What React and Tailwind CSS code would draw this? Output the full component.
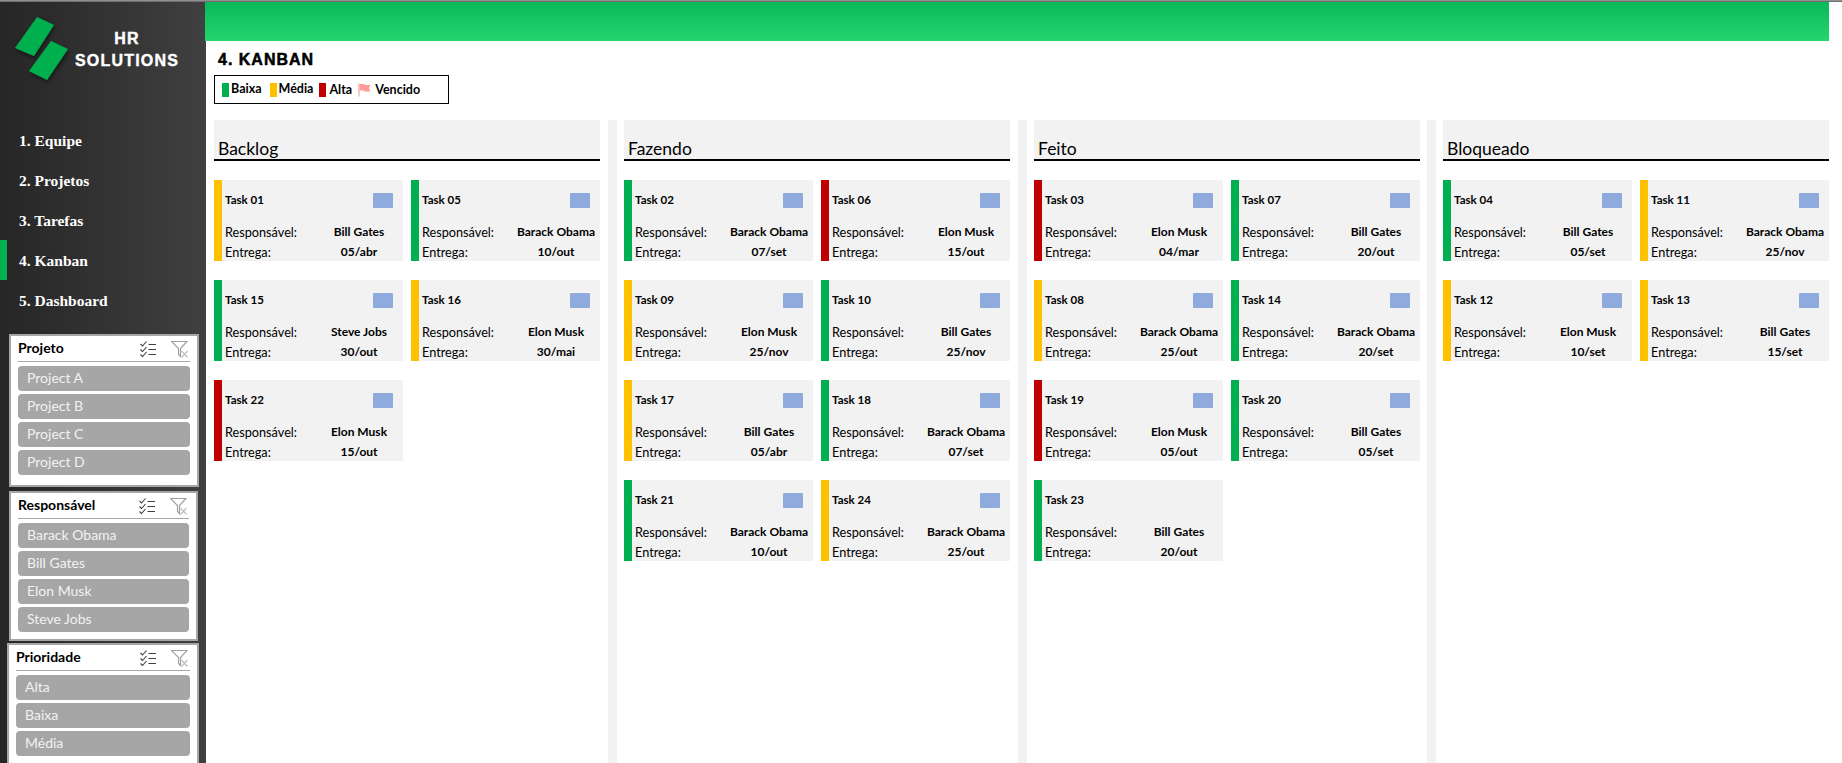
const GREEN = "bg-[#00b050]";
const YELLOW = "bg-[#ffc000]";
const RED = "bg-[#c00000]";
const PRI = { g: GREEN, y: YELLOW, r: RED };

const COLUMNS = [
  {
    name: "Backlog",
    tasks: [
      ["01", "y", "Bill Gates", "05/abr"],
      ["05", "g", "Barack Obama", "10/out"],
      ["15", "g", "Steve Jobs", "30/out"],
      ["16", "y", "Elon Musk", "30/mai"],
      ["22", "r", "Elon Musk", "15/out"],
    ],
  },
  {
    name: "Fazendo",
    tasks: [
      ["02", "g", "Barack Obama", "07/set"],
      ["06", "r", "Elon Musk", "15/out"],
      ["09", "y", "Elon Musk", "25/nov"],
      ["10", "g", "Bill Gates", "25/nov"],
      ["17", "y", "Bill Gates", "05/abr"],
      ["18", "g", "Barack Obama", "07/set"],
      ["21", "g", "Barack Obama", "10/out"],
      ["24", "y", "Barack Obama", "25/out"],
    ],
  },
  {
    name: "Feito",
    tasks: [
      ["03", "r", "Elon Musk", "04/mar"],
      ["07", "g", "Bill Gates", "20/out"],
      ["08", "y", "Barack Obama", "25/out"],
      ["14", "g", "Barack Obama", "20/set"],
      ["19", "r", "Elon Musk", "05/out"],
      ["20", "g", "Bill Gates", "05/set"],
      ["23", "g", "Bill Gates", "20/out", true],
    ],
  },
  {
    name: "Bloqueado",
    tasks: [
      ["04", "g", "Bill Gates", "05/set"],
      ["11", "y", "Barack Obama", "25/nov"],
      ["12", "y", "Elon Musk", "10/set"],
      ["13", "y", "Bill Gates", "15/set"],
    ],
  },
];

function Card({ id, pri, who, date, noIcon }) {
  return (
    <div className="flex h-[81px] w-[189px] bg-[#f2f2f2]">
      <div className={`h-full w-[8px] shrink-0 ${PRI[pri]}`} />
      <div className="flex min-w-0 flex-1 flex-col pl-[3px] text-[12px] leading-[20px] text-black">
        <div className="mb-[3px] flex h-[39px] shrink-0 items-center justify-between pr-[10px]">
          <span className="text-[11.5px] font-bold">Task {id}</span>
          {!noIcon && <span className="mt-[1px] h-[15px] w-[20px] rounded-[1px] bg-[#8faadc]" />}
        </div>
        <div className="flex">
          <span className="w-[90px] shrink-0 text-[12.7px]">Responsável:</span>
          <span className="flex-1 text-center font-bold whitespace-nowrap">{who}</span>
        </div>
        <div className="flex">
          <span className="w-[90px] shrink-0 text-[12.7px]">Entrega:</span>
          <span className="flex-1 text-center font-bold">{date}</span>
        </div>
      </div>
    </div>
  );
}

function Column({ name, tasks }) {
  return (
    <section className="w-[386px] shrink-0">
      <div className="flex h-[41px] items-end border-b-2 border-black bg-[#f2f2f2] pl-[4px] text-[17.5px] leading-[20px] font-normal text-black">
        {name}
      </div>
      <div className="mt-[19px] grid grid-cols-[189px_189px] gap-x-[8px] gap-y-[19px]">
        {tasks.map(([id, pri, who, date, noIcon]) => (
          <Card key={id} id={id} pri={pri} who={who} date={date} noIcon={noIcon} />
        ))}
      </div>
    </section>
  );
}

function ChecklistIcon() {
  return (
    <svg width="16" height="16" viewBox="0 0 16 16" fill="none" stroke="#404040" strokeWidth="1.1">
      <path d="M0.5 3 L2.5 5 L6.5 0.5" />
      <path d="M0.5 8.5 L2.5 10.5 L6.5 6" />
      <path d="M0.5 13.5 L2.5 15.5 L6.5 11" />
      <path d="M8.5 3.5 H16 M8.5 8.5 H16 M8.5 13.5 H16" />
    </svg>
  );
}

function ClearFilterIcon() {
  return (
    <svg width="17" height="17" viewBox="0 0 17 17" fill="none" strokeWidth="1.2">
      <path d="M0.5 0.5 H16 L9.5 7.5 V15.5 L7.5 13.5 V7.5 Z" stroke="#a0a0a0" />
      <path d="M10.5 10 L16.5 16.5 M16.5 10 L10.5 16.5" stroke="#bfbfbf" />
    </svg>
  );
}

function Slicer({ title, items, className }) {
  return (
    <div className={`border-2 border-[#a6a6a6] bg-white ${className}`}>
      <div className="flex h-[25px] items-center justify-between">
        <span className="pb-[3px] text-[14px] font-bold text-black">{title}</span>
        <div className="flex items-center gap-[15px] pt-[1px] pr-[2px]">
          <ChecklistIcon />
          <ClearFilterIcon />
        </div>
      </div>
      <div className="mb-[4px] h-[1px] bg-[#a6a6a6]" />
      <div className="flex flex-col gap-[3px]">
        {items.map((t) => (
          <div
            key={t}
            className="flex h-[25px] items-center rounded-[4px] bg-[#a6a6a6] pb-[3px] pl-[9px] text-[14px] text-[#f2f2f2]"
          >
            {t}
          </div>
        ))}
      </div>
    </div>
  );
}

function Logo() {
  return (
    <svg width="80" height="90" viewBox="0 0 80 90" className="absolute left-0 top-0">
      <defs>
        <filter id="sh" x="-30%" y="-30%" width="160%" height="160%">
          <feDropShadow dx="1" dy="2" stdDeviation="2" floodColor="#000" floodOpacity="0.6" />
        </filter>
      </defs>
      <polygon points="37,15 54,23 34,54 15,46" fill="#00b050" filter="url(#sh)" />
      <polygon points="51,39 68,47 47,78 29,69" fill="#00b050" filter="url(#sh)" />
    </svg>
  );
}

const NAV = ["1. Equipe", "2. Projetos", "3. Tarefas", "4. Kanban", "5. Dashboard"];

function Sidebar() {
  return (
    <aside className="relative z-10 flex h-[761px] w-[206px] shrink-0 flex-col overflow-hidden bg-gradient-to-r from-[#262626] to-[#404040]">
      <div className="relative h-[118px] shrink-0">
        <Logo />
        <div className="absolute left-[75px] top-[26px] w-[104px] text-center [font-family:'Liberation_Sans',sans-serif] text-[16px] leading-[22px] font-bold tracking-[1.2px] whitespace-nowrap text-white [-webkit-text-stroke:0.4px_white]">
          HR
          <br />
          SOLUTIONS
        </div>
      </div>
      <nav className="shrink-0">
        {NAV.map((n) => (
          <div key={n} className="relative flex h-[40px] items-center pt-[2px] pl-[19px] [font-family:'Liberation_Serif',serif] text-[15.5px] font-bold text-white">
            {n === "4. Kanban" && <span className="absolute left-0 top-0 h-full w-[7px] bg-[#00b050]" />}
            {n}
          </div>
        ))}
      </nav>
      <Slicer
        title="Projeto"
        items={["Project A", "Project B", "Project C", "Project D"]}
        className="mt-[14px] ml-[9px] h-[153px] w-[190px] shrink-0 px-[7px]"
      />
      <Slicer
        title="Responsável"
        items={["Barack Obama", "Bill Gates", "Elon Musk", "Steve Jobs"]}
        className="mt-[4px] ml-[9px] h-[150px] w-[189px] shrink-0 px-[7px]"
      />
      <Slicer
        title="Prioridade"
        items={["Alta", "Baixa", "Média"]}
        className="mt-[2px] ml-[7px] h-[140px] w-[192px] shrink-0 px-[7px]"
      />
    </aside>
  );
}

function Legend() {
  return (
    <div className="mt-[6px] flex h-[29px] w-[235px] items-center border-[1.5px] border-black pl-[7px] text-[12.5px] font-bold text-black">
      <span className="h-[14px] w-[7px] bg-[#00b050]" />
      <span className="ml-[2px]">Baixa</span>
      <span className="ml-[8px] h-[14px] w-[7px] bg-[#ffc000]" />
      <span className="ml-[2px]">Média</span>
      <span className="ml-[6px] mt-[1px] h-[14px] w-[7px] bg-[#c00000]" />
      <span className="ml-[3px] mt-[2px]">Alta</span>
      <svg width="13" height="14" viewBox="0 0 13 14" className="ml-[6px]">
        <path d="M1 0.5 V13.5" stroke="#ffb3b3" strokeWidth="1.5" />
        <path d="M1.5 1 H6.5 L7 2 H12.5 L11 5 L12.5 8.5 H6 L5.5 7.5 H1.5 Z" fill="#ff9a9a" />
      </svg>
      <span className="ml-[4px] mt-[2px]">Vencido</span>
    </div>
  );
}

export default function App() {
  return (
    <div className="h-[763px] w-[1842px] overflow-hidden bg-white [font-family:Lato,sans-serif]">
      <div className="h-[2px] bg-gradient-to-b from-[#a0a0a0] to-[#606060]" />
      <div className="flex">
        <Sidebar />
        <main className="min-w-0 flex-1">
          <div className="relative z-20 -ml-[1px] mr-[13px] h-[39px] bg-gradient-to-b from-[#08b85a] to-[#22d66f]" />
          <div className="pl-[8px]">
            <h1 className="mt-[10px] pl-[4px] [font-family:'Liberation_Sans',sans-serif] text-[16px] leading-[18px] font-bold tracking-[1px] text-black [-webkit-text-stroke:0.5px_black]">
              4. KANBAN
            </h1>
            <Legend />
            <div className="mt-[16px] flex h-[643px]">
              <Column name={COLUMNS[0].name} tasks={COLUMNS[0].tasks} />
              <div className="mr-[7px] ml-[8px] h-full w-[9px] bg-[#f2f2f2]" />
              <Column name={COLUMNS[1].name} tasks={COLUMNS[1].tasks} />
              <div className="mr-[7px] ml-[8px] h-full w-[9px] bg-[#f2f2f2]" />
              <Column name={COLUMNS[2].name} tasks={COLUMNS[2].tasks} />
              <div className="mr-[7px] ml-[7px] h-full w-[9px] bg-[#f2f2f2]" />
              <Column name={COLUMNS[3].name} tasks={COLUMNS[3].tasks} />
            </div>
          </div>
        </main>
      </div>
    </div>
  );
}
